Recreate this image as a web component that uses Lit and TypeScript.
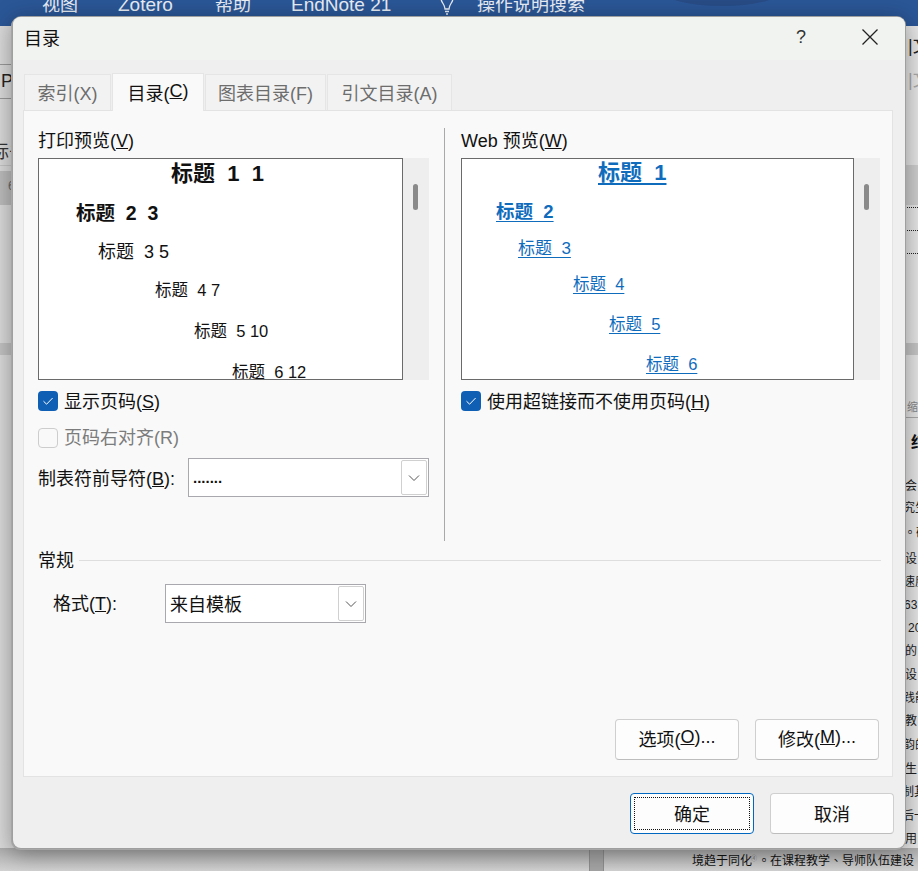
import { LitElement, html, css, svg } from "lit";
import { customElement } from "lit/decorators.js";

const FONT = `"Liberation Sans", "Noto Sans CJK SC", sans-serif`;
const TC = `"Liberation Sans", "Noto Sans CJK TC", sans-serif`;

interface Frag { x: number; y: number; t: string; c?: string; s?: number; b?: boolean; tc?: boolean }
const fragments: Frag[] = [
  { x: 1, y: 72, t: "PA", s: 18, c: "#222" },
  { x: -9, y: 143, t: "标书", s: 18, c: "#333" },
  { x: 8, y: 177, t: "6", s: 12, c: "#666" },
  { x: 908, y: 37, t: "|文", s: 18, c: "#222" },
  { x: 908, y: 71, t: "|文", s: 18, c: "#aaa" },
  { x: 907, y: 398, t: "缩", s: 11, c: "#888" },
  { x: 911, y: 434, t: "结", s: 16, c: "#111", b: true },
  { x: 905, y: 477, t: "会", s: 12, c: "#222" },
  { x: 903, y: 499, t: "究生", s: 12, c: "#222" },
  { x: 904, y: 524, t: "。研", s: 12, c: "#222", tc: true },
  { x: 905, y: 550, t: "设", s: 12, c: "#222" },
  { x: 903, y: 573, t: "速度", s: 12, c: "#222" },
  { x: 904, y: 596, t: "63", s: 12, c: "#222" },
  { x: 908, y: 619, t: "20", s: 12, c: "#222" },
  { x: 905, y: 642, t: "的", s: 12, c: "#222" },
  { x: 905, y: 666, t: "设", s: 12, c: "#222" },
  { x: 903, y: 689, t: "践能", s: 12, c: "#222" },
  { x: 905, y: 712, t: "教", s: 12, c: "#222" },
  { x: 903, y: 736, t: "韵的", s: 12, c: "#222" },
  { x: 905, y: 760, t: "生", s: 12, c: "#222" },
  { x: 902, y: 783, t: "制其", s: 12, c: "#222" },
  { x: 902, y: 807, t: "后一", s: 12, c: "#222" },
  { x: 905, y: 830, t: "用", s: 12, c: "#222" },
  { x: 692, y: 852, t: "境趋于同化", s: 12, c: "#111" },
  { x: 751, y: 849, t: "④", s: 6, c: "#777", tc: true },
  { x: 758, y: 852, t: "。在课程教学、导师队伍建设", s: 12, c: "#111", tc: true },
];

const chevron = svg`<svg width="14" height="14" viewBox="0 0 14 14"><path d="M2 4.5 L7 9.5 L12 4.5" fill="none" stroke="#555" stroke-width="1"/></svg>`;
const tick = svg`<svg width="20" height="20" viewBox="0 0 20 20"><path d="M5.5 10.2 L8.6 13.2 L14.6 7" fill="none" stroke="#fff" stroke-width="1"/></svg>`;

interface Row { label: string; num: string; x: number; h: number; size: number; bold?: boolean }
const printRows: Row[] = [
  { label: "标题", num: "  1  1", x: 132, h: 41, size: 22, bold: true },
  { label: "标题", num: "  2  3", x: 37, h: 39, size: 19.5, bold: true },
  { label: "标题", num: "  3 5", x: 59, h: 39, size: 18 },
  { label: "标题", num: "  4 7", x: 116, h: 41, size: 16.5 },
  { label: "标题", num: "  5 10", x: 155, h: 41, size: 16.5 },
  { label: "标题", num: "  6 12", x: 193, h: 40, size: 16.5 },
];
const webRows: Row[] = [
  { label: "标题", num: "  1", x: 136, h: 41, size: 22, bold: true },
  { label: "标题", num: "  2", x: 34, h: 37, size: 18.5, bold: true },
  { label: "标题", num: "  3", x: 56, h: 36, size: 17 },
  { label: "标题", num: "  4", x: 111, h: 40, size: 16.5 },
  { label: "标题", num: "  5", x: 147, h: 40, size: 16.5 },
  { label: "标题", num: "  6", x: 184, h: 40, size: 16.5 },
];

@customElement("app-root")
export class AppRoot extends LitElement {
  static styles = css`
    :host { display: block; width: 918px; height: 871px; position: relative; overflow: hidden;
      font-family: "Liberation Sans", "Noto Sans CJK SC", sans-serif; background: #e2e2e2; color: #111; }
    .ribbon { height: 26px; background: #2b5797; position: relative; overflow: hidden; }
    .ribbon-blob { position: absolute; left: 658px; top: -30px; width: 128px; height: 36px; border-radius: 50%; background: #284c86; }
    .ribbon-items { height: 8px; color: #e9eef6; font-size: 18px; }
    .ribbon-items span { position: absolute; top: -5px; line-height: 20px; white-space: nowrap; }
    .ribbon-items .latin { font-size: 19px; }
    .ribbon-items svg { position: absolute; left: 438px; top: -5px; }
    .backdrop { position: absolute; inset: 26px 0 0 0; background: linear-gradient(90deg, #dadada, #e6e6e6); }
    .band { position: absolute; }
    .frag { position: absolute; white-space: nowrap; line-height: 18px; }
    .dots { position: absolute; left: 905px; right: 0; border-top: 1px dotted #222; }
    .lower { position: absolute; left: 0; right: 0; top: 848px; height: 23px; background: linear-gradient(180deg, #acacac, #d2d2d2); }
    .pagegap { position: absolute; left: 589px; width: 13px; top: 0; bottom: 0; background: #a4a4a4; border: solid #8e8e8e; border-width: 0 1px; }

    .dialog { position: absolute; left: 13px; top: 17px; width: 892px; height: 831px; background: #efefef; border-radius: 8px;
      box-shadow: 0 0 0 1px #9f9f9f, -1px 1px 0 1px #a6a6a6, 0 4px 22px 2px rgba(0,0,0,.35); display: flex; flex-direction: column; overflow: hidden; font-size: 18px; }
    .titlebar { height: 43px; box-sizing: border-box; background: #f1f3f0; display: flex; align-items: center; padding: 0 26px 3px 11px; flex: none; }
    .title { flex: 1; color: #111; }
    .help { font-size: 18px; color: #333; width: 65px; }
    .x { display: block; }
    .tabs { display: flex; padding: 14px 0 0 11px; height: 36px; box-sizing: content-box; flex: none; align-items: flex-end; position: relative; z-index: 1; }
    .tab { height: 36px; box-sizing: border-box; display: flex; align-items: center; justify-content: center; color: #6d6d6d; background: #f2f2f2; border: 1px solid #e5e5e5; border-bottom: none; margin-right: 1px; white-space: nowrap; padding-bottom: 2px; }
    .tab.active { height: 38px; background: #f9f9f9; color: #111; margin-bottom: -1px; }
    .panel { margin: 0 12px 0 10px; height: 667px; box-sizing: border-box; background: #f9f9f9; border: 1px solid #e3e3e3; display: flex; flex-direction: column; padding: 17px 11px 0 14px; flex: none; }
    .columns { display: flex; height: 413px; flex: none; }
    .col-left { width: 391px; flex: none; display: flex; flex-direction: column; }
    .divider { width: 1px; background: #a9a9a9; margin: 0 16px 0 15px; flex: none; }
    .col-right { width: 419px; flex: none; display: flex; flex-direction: column; }
    .label { height: 30px; line-height: 27px; white-space: nowrap; }
    .preview { display: flex; height: 222px; flex: none; }
    .paper { box-sizing: border-box; flex: 1; background: #fff; border: 1px solid #6a6a6a; overflow: hidden; padding-top: 3px; }
    .paper.print { padding-top: 4px; }
    .track { width: 26px; flex: none; background: #eeeeee; position: relative; }
    .thumb { position: absolute; left: 10px; top: 26px; width: 5px; height: 26px; border-radius: 3px; background: #8a8a8a; }
    .line { display: flex; align-items: flex-start; white-space: pre; line-height: 1; }
    .bold { font-weight: 700; }
    .link { color: #0f6cbd; text-decoration: underline; text-underline-offset: 3px; }
    .check-row { display: flex; align-items: center; gap: 6px; height: 20px; margin-top: 11px; flex: none; white-space: nowrap; }
    .check-row .text { padding-bottom: 2px; }
    .check-row.second { margin-top: 17px; color: #7c7c7c; }
    .check-row.second .text { padding-bottom: 4px; }
    .box { width: 20px; height: 20px; box-sizing: border-box; border-radius: 4px; background: #0f5fb5; flex: none; display: flex; }
    .box.off { background: transparent; border: 1px solid #cdcdcd; }
    .combo-row { display: flex; align-items: center; margin-top: 10px; height: 39px; flex: none; white-space: nowrap; }
    .combo-label { width: 150px; flex: none; padding-bottom: 2px; }
    .combo { box-sizing: border-box; height: 39px; background: #fff; border: 1px solid #a8a8ae; display: flex; align-items: center; justify-content: space-between; padding: 0 1px 0 4px; flex: none; }
    .combo-btn { box-sizing: border-box; width: 26px; height: 35px; border: 1px solid #d0d0d0; border-radius: 2px; display: flex; align-items: center; justify-content: center; background: #fff; }
    .combo-value { padding-bottom: 2px; }
    .leaders { font-weight: 700; font-size: 15px; line-height: 1; }
    .legend { display: flex; align-items: center; gap: 5px; height: 24px; margin-top: 6px; flex: none; }
    .legend i { flex: 1; height: 1px; background: #dedede; margin-top: 2px; }
    .format { display: flex; align-items: center; height: 39px; margin: 13px 0 0 15px; flex: none; white-space: nowrap; }
    .format-label { width: 112px; flex: none; padding-bottom: 4px; }
    .actions { display: flex; justify-content: flex-end; gap: 16px; margin-top: 96px; padding-right: 2px; flex: none; }
    .btn { box-sizing: border-box; width: 124px; height: 41px; background: #fdfdfd; border: 1px solid #cfcfcf; border-bottom-color: #bdbdbd; border-radius: 4px; display: flex; align-items: center; justify-content: center; color: #111; flex: none; white-space: nowrap; padding-bottom: 2px; }
    .actions .btn { padding-bottom: 4px; }
    .footer { display: flex; justify-content: flex-end; gap: 16px; padding: 16px 11px 0 0; flex: none; }
    .btn.primary { border: 1.5px solid #0067c0; position: relative; }
    .btn.primary::after { content: ""; position: absolute; inset: 3px 3px; border: 1px dotted #111; }
  `;

  private renderRows(rows: Row[], link: boolean) {
    return rows.map(
      (r) => html`<div class="line ${r.bold ? "bold" : ""}" style="margin-left:${r.x}px;height:${r.h}px;font-size:${r.size}px"><span class="${link ? "link" : ""}">${r.label}${r.num}</span></div>`
    );
  }

  render() {
    return html`
      <div class="ribbon">
        <div class="ribbon-blob"></div>
        <div class="ribbon-items">
          <span style="left:42px">视图</span><span class="latin" style="left:118px">Zotero</span><span style="left:215px">帮助</span>
          <span class="latin" style="left:291px">EndNote 21</span>
          <svg width="18" height="24" viewBox="0 0 18 24"><path d="M3 3 C3 8 7 9 7 14 H11 C11 9 15 8 15 3 M7 16.5 H11 M8 19 H10" fill="none" stroke="#e9eef6" stroke-width="1.3"/></svg>
          <span style="left:477px">操作说明搜索</span>
        </div>
      </div>
      <div class="backdrop">
        <div class="band" style="left:0;width:13px;top:38px;height:1px;background:#999"></div>
        <div class="band" style="left:0;width:13px;top:72px;height:1px;background:#999"></div>
        <div class="band" style="left:0;width:13px;top:139px;height:1px;background:#c4c4c4"></div>
        <div class="band" style="left:0;width:13px;top:145px;height:34px;background:#bcbcbc"></div>
        <div class="band" style="left:0;width:13px;top:317px;height:12px;background:#c2c2c2"></div>
        <div class="band" style="left:905px;right:0;top:139px;height:40px;background:#cecece"></div>
        <div class="band" style="left:905px;right:0;top:317px;height:12px;background:#c6c6c6"></div>
        <div class="band" style="left:905px;right:0;top:391px;height:1px;background:#aaa"></div>
        <div class="dots" style="top:181px"></div>
        <div class="dots" style="top:204px"></div>
        <div class="dots" style="top:227px"></div>
      </div>
      <div class="lower"><div class="pagegap"></div></div>
      ${fragments.map(
        (f) => html`<div class="frag" style="left:${f.x}px;top:${f.y}px;font-size:${f.s}px;color:${f.c};font-weight:${f.b ? 700 : 400};font-family:${f.tc ? TC : FONT}">${f.t}</div>`
      )}
      <div class="dialog">
        <div class="titlebar">
          <div class="title">目录</div>
          <div class="help">?</div>
          <svg class="x" width="18" height="18" viewBox="0 0 18 18"><path d="M1.5 1.5 L16.5 16.5 M16.5 1.5 L1.5 16.5" stroke="#222" stroke-width="1.3" fill="none"/></svg>
        </div>
        <div class="tabs">
          <div class="tab" style="width:87px">索引(X)</div>
          <div class="tab active" style="width:92px">目录(<u>C</u>)</div>
          <div class="tab" style="width:121px">图表目录(F)</div>
          <div class="tab" style="width:125px">引文目录(A)</div>
        </div>
        <div class="panel">
          <div class="columns">
            <div class="col-left">
              <div class="label">打印预览(<u>V</u>)</div>
              <div class="preview">
                <div class="paper print">${this.renderRows(printRows, false)}</div>
                <div class="track"><div class="thumb"></div></div>
              </div>
              <div class="check-row"><span class="box">${tick}</span><span class="text">显示页码(<u>S</u>)</span></div>
              <div class="check-row second"><span class="box off"></span><span class="text">页码右对齐(R)</span></div>
              <div class="combo-row">
                <div class="combo-label">制表符前导符(<u>B</u>):</div>
                <div class="combo" style="width:241px"><span class="leaders">.......</span><span class="combo-btn">${chevron}</span></div>
              </div>
            </div>
            <div class="divider"></div>
            <div class="col-right">
              <div class="label">Web 预览(<u>W</u>)</div>
              <div class="preview">
                <div class="paper">${this.renderRows(webRows, true)}</div>
                <div class="track"><div class="thumb"></div></div>
              </div>
              <div class="check-row"><span class="box">${tick}</span><span class="text">使用超链接而不使用页码(<u>H</u>)</span></div>
            </div>
          </div>
          <div class="legend"><span>常规</span><i></i></div>
          <div class="format">
            <div class="format-label">格式(<u>T</u>):</div>
            <div class="combo" style="width:201px"><span class="combo-value">来自模板</span><span class="combo-btn">${chevron}</span></div>
          </div>
          <div class="actions">
            <div class="btn">选项(<u>O</u>)...</div>
            <div class="btn">修改(<u>M</u>)...</div>
          </div>
        </div>
        <div class="footer">
          <div class="btn primary">确定</div>
          <div class="btn">取消</div>
        </div>
      </div>
    `;
  }
}
